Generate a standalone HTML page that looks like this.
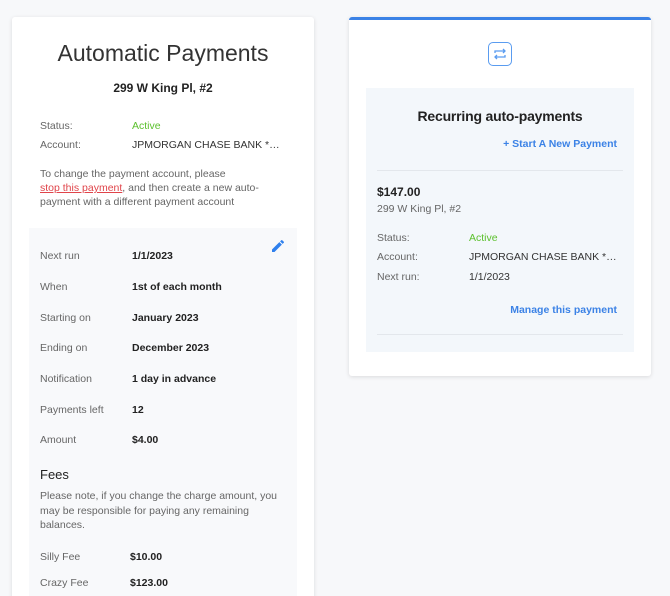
<!DOCTYPE html>
<html style="width:670px;height:596px;overflow:hidden"><head><style>
*{margin:0;padding:0;box-sizing:border-box}
body{width:670px;height:596px;background:#f7f8fa;font-family:"Liberation Sans",sans-serif;font-size:10.5px;color:#222;position:relative;overflow:hidden}
.a{position:absolute;white-space:nowrap;line-height:14px}
.card{position:absolute;background:#fff;border-radius:3px;box-shadow:0 1px 4px rgba(0,0,0,.12)}
.g{color:#666}.b{font-weight:bold;color:#222}
.grn{color:#5cc02e}.blue{color:#3b82e6;font-weight:bold}
.el{overflow:hidden;text-overflow:ellipsis;width:150px}
</style></head><body>
<div class="card" style="left:12px;top:17px;width:302px;height:585px"></div>
<div style="position:absolute;left:29px;top:228px;width:268px;height:370px;background:#f8f9fb"></div>
<div class="a" style="left:12px;width:302px;text-align:center;top:38px;font-size:23px;line-height:30px;color:#333">Automatic Payments</div>
<div class="a b" style="left:12px;width:302px;text-align:center;top:81px;font-size:12px">299 W King Pl, #2</div>
<div class="a g" style="left:40px;top:119px">Status:</div><div class="a grn" style="left:132px;top:119px">Active</div>
<div class="a g" style="left:40px;top:138px">Account:</div><div class="a el" style="left:132px;top:138px;color:#333">JPMORGAN CHASE BANK **** 1234</div>
<div class="a g" style="left:40px;top:167px">To change the payment account, please</div>
<div class="a g" style="left:40px;top:181px"><span style="color:#e0444a;text-decoration:underline">stop this payment</span>, and then create a new auto-</div>
<div class="a g" style="left:40px;top:195px">payment with a different payment account</div>
<svg style="position:absolute;left:270px;top:238px" width="16" height="16" viewBox="0 0 24 24"><path fill="#2f80ed" d="M3 17.25V21h3.75L17.81 9.94l-3.75-3.75L3 17.25zM20.71 7.04a1 1 0 000-1.41l-2.34-2.34a1 1 0 00-1.41 0l-1.83 1.83 3.75 3.75 1.83-1.83z"/></svg>
<div class="a g" style="left:40px;top:249px">Next run</div><div class="a b" style="left:132px;top:249px">1/1/2023</div>
<div class="a g" style="left:40px;top:280px">When</div><div class="a b" style="left:132px;top:280px">1st of each month</div>
<div class="a g" style="left:40px;top:311px">Starting on</div><div class="a b" style="left:132px;top:311px">January 2023</div>
<div class="a g" style="left:40px;top:341px">Ending on</div><div class="a b" style="left:132px;top:341px">December 2023</div>
<div class="a g" style="left:40px;top:372px">Notification</div><div class="a b" style="left:132px;top:372px">1 day in advance</div>
<div class="a g" style="left:40px;top:403px">Payments left</div><div class="a b" style="left:132px;top:403px">12</div>
<div class="a g" style="left:40px;top:433px">Amount</div><div class="a b" style="left:132px;top:433px">$4.00</div>
<div class="a" style="left:40px;top:467px;font-size:13px;line-height:16px;color:#222">Fees</div>
<div class="a g" style="left:40px;top:489px">Please note, if you change the charge amount, you</div>
<div class="a g" style="left:40px;top:504px">may be responsible for paying any remaining</div>
<div class="a g" style="left:40px;top:518px">balances.</div>
<div class="a g" style="left:40px;top:550px">Silly Fee</div><div class="a b" style="left:130px;top:550px">$10.00</div>
<div class="a g" style="left:40px;top:576px">Crazy Fee</div><div class="a b" style="left:130px;top:576px">$123.00</div>

<div class="card" style="left:349px;top:17px;width:302px;height:359px;border-top:3px solid #3b82e6"></div>
<div style="position:absolute;left:488px;top:42px;width:24px;height:24px;border:1.5px solid #5a9cf0;border-radius:5px"></div>
<svg style="position:absolute;left:492px;top:46px" width="16" height="16" viewBox="0 0 16 16" fill="none" stroke="#5a9cf0" stroke-width="1.3"><path d="M3 7V5h10M11 3l2 2-2 2M13 9v2H3M5 13l-2-2 2-2"/></svg>
<div style="position:absolute;left:366px;top:88px;width:268px;height:264px;background:#f3f7fb"></div>
<div class="a" style="left:366px;width:268px;text-align:center;top:108px;font-size:14px;line-height:17px;color:#222;font-weight:bold;letter-spacing:-0.2px">Recurring auto-payments</div>
<div class="a blue" style="left:366px;width:251px;text-align:right;top:137px">+ Start A New Payment</div>
<div style="position:absolute;left:377px;top:170px;width:246px;height:1px;background:#e3e7ec"></div>
<div class="a b" style="left:377px;top:185px;font-size:12px">$147.00</div>
<div class="a g" style="left:377px;top:202px">299 W King Pl, #2</div>
<div class="a g" style="left:377px;top:231px">Status:</div><div class="a grn" style="left:469px;top:231px">Active</div>
<div class="a g" style="left:377px;top:250px">Account:</div><div class="a el" style="left:469px;top:250px;color:#333">JPMORGAN CHASE BANK **** 1234</div>
<div class="a g" style="left:377px;top:270px">Next run:</div><div class="a" style="left:469px;top:270px;color:#333">1/1/2023</div>
<div class="a blue" style="left:366px;width:251px;text-align:right;top:303px">Manage this payment</div>
<div style="position:absolute;left:377px;top:334px;width:246px;height:1px;background:#e3e7ec"></div>
</body></html>
